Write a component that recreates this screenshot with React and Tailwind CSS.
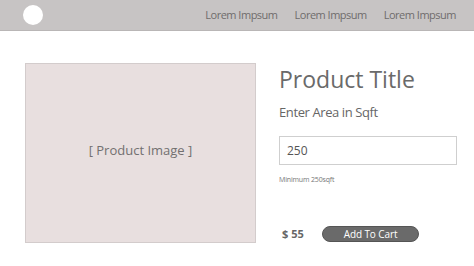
export default function App() {
  const font = { fontFamily: '"Open Sans", "Noto Sans", sans-serif' };
  return (
    <div className="w-[474px] h-[266px] bg-white overflow-hidden" style={font}>
      <header className="h-[31px] bg-[#c7c4c4] border-b border-[#b9b6b6] flex items-center pl-[23px] pr-[18px]">
        <div className="w-[20px] h-[20px] rounded-full bg-white" />
        <nav className="ml-auto flex gap-[17px] text-[11px] tracking-[-0.5px] text-[#6f6c6c]">
          <span>Lorem Impsum</span>
          <span>Lorem Impsum</span>
          <span>Lorem Impsum</span>
        </nav>
      </header>
      <main className="flex pl-[25px] pt-[32px]">
        <div className="w-[231px] h-[180px] bg-[#e8dfdf] border border-[#d3cccc] flex items-center justify-center pb-[4px] text-[13px] text-[#727070]">
          [ Product Image ]
        </div>
        <div className="ml-[23px] flex flex-col">
          <h1 className="text-[23px] leading-[30px] mt-[1px] text-[#6a6a6a]">Product Title</h1>
          <p className="text-[13px] leading-[18px] mt-[9px] tracking-[-0.4px] text-[#666]">Enter Area in Sqft</p>
          <div className="mt-[15px] w-[178px] h-[29px] border border-[#cfcfcf] flex items-center pl-[7px] text-[12px] text-[#555]">250</div>
          <p className="mt-[11px] text-[7px] leading-[8px] tracking-[-0.15px] text-[#777]">Minimum 250sqft</p>
          <div className="mt-[42px] flex items-center">
            <span className="ml-[3px] text-[11px] font-bold text-[#666] w-[40px]">$ 55</span>
            <button className="w-[97px] h-[16px] rounded-full bg-[#6a6a6a] border border-[#555] text-white text-[10px] tracking-[-0.1px] leading-none flex items-center justify-center">Add To Cart</button>
          </div>
        </div>
      </main>
    </div>
  );
}
